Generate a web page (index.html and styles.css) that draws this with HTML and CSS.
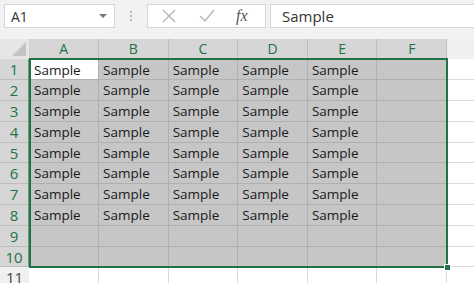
FILE: index.html
```html
<!DOCTYPE html>
<html>
<head>
  <meta charset="UTF-8">
  <title>Sheet</title>
  <link rel="stylesheet" href="styles.css">
</head>
<body>
<div class="toolbar">
  <div class="namebox">
    <span>A1</span>
    <svg class="caret" width="8" height="5" viewBox="0 0 8 5"><path d="M0 0H8L4 4z" fill="#777"/></svg>
  </div>
  <div class="grip"><i></i><i></i><i></i></div>
  <div class="fxbtns">
    <svg width="14" height="14" viewBox="0 0 14 14"><path d="M1 1L13 13M13 1L1 13" stroke="#b4b4b4" stroke-width="1.3" fill="none"/></svg>
    <svg width="16" height="14" viewBox="0 0 16 14"><path d="M1 7L6 12L15 1" stroke="#b4b4b4" stroke-width="1.4" fill="none"/></svg>
    <span class="fx">fx</span>
  </div>
  <div class="formula">Sample</div>
</div>

<div class="sheet">
  <table class="grid">
    <thead>
      <tr>
        <th class="corner"><div class="tri"></div></th>
        <th class="sel">A</th><th class="sel">B</th><th class="sel">C</th>
        <th class="sel">D</th><th class="sel">E</th><th class="sel">F</th>
        <th class="rest"></th>
      </tr>
    </thead>
    <tbody id="rows"></tbody>
  </table>
  <div class="selection"><div class="handle"></div></div>
</div>

<script>
  // build rows 1..11
  let body = document.getElementById("rows");
  for (let r = 1; r <= 11; r++) {
    let tr = document.createElement("tr");
    let th = document.createElement("th");
    th.textContent = r;
    if (r <= 10) th.className = "sel";
    tr.appendChild(th);
    for (let c = 0; c < 7; c++) {
      let td = document.createElement("td");
      if (r <= 10 && c < 6) td.className = "on";
      if (r == 1 && c == 0) td.className = "active";
      if (r <= 8 && c < 5) td.textContent = "Sample";
      tr.appendChild(td);
    }
    body.appendChild(tr);
  }
</script>
</body>
</html>
```

FILE: styles.css
```css
* {
  margin: 0;
  padding: 0;
  box-sizing: border-box;
}
body {
  width: 474px;
  height: 283px;
  overflow: hidden;
  background: #ffffff;
  font-family: "Open Sans", "Noto Sans", sans-serif;
}
.toolbar {
  display: flex;
  align-items: flex-start;
  height: 39px;
  padding-top: 4px;
  background: #f2f2f2;
}
.namebox {
  display: flex;
  align-items: center;
  justify-content: space-between;
  width: 111px;
  height: 24px;
  margin-left: 4px;
  padding: 0 7px 0 6px;
  background: #fff;
  border: 1px solid #d6d6d6;
  font-size: 14px;
  color: #333;
}
.grip {
  display: flex;
  flex-direction: column;
  gap: 2px;
  margin: 7px 0 0 15px;
  width: 2px;
}
.grip i {
  display: block;
  width: 2px;
  height: 2px;
  background: #b8b8b8;
}
.fxbtns {
  display: flex;
  align-items: center;
  gap: 23px;
  width: 119px;
  height: 24px;
  margin-left: 15px;
  padding-left: 14px;
  background: #fff;
  border: 1px solid #d6d6d6;
}
.fx {
  font-family: "Liberation Serif", serif;
  font-style: italic;
  font-size: 16px;
  color: #555;
  margin-left: -2px;
}
.formula {
  flex: 1;
  height: 24px;
  margin-left: 4px;
  padding: 1px 0 0 11px;
  background: #fff;
  border: 1px solid #d6d6d6;
  border-right: none;
  font-size: 15px;
  color: #333;
}
.sheet {
  position: relative;
}
.grid {
  border-collapse: collapse;
  table-layout: fixed;
  width: 516px;
}
.grid th, .grid td {
  height: 20.8px;
  font-size: 13.5px;
  font-weight: normal;
  line-height: 18px;
  white-space: nowrap;
  overflow: hidden;
}
.grid thead th {
  height: 20px;
  width: 69.6px;
  background: #f0f0f0;
  border-right: 1px solid #d0d0d0;
  color: #444;
  font-size: 14px;
  text-align: center;
}
.grid thead th.sel {
  background: #d6d6d6;
  color: #217346;
  border-right: 1px solid #bdbdbd;
  border-bottom: 2px solid #6a9e80;
}
.grid thead th.corner {
  width: 29px;
  background: #e6e6e6;
  position: relative;
}
.grid thead th.rest {
  width: 70px;
  border-right: none;
}
.tri {
  position: absolute;
  right: 3px;
  bottom: 3px;
  width: 0;
  height: 0;
  border-left: 14px solid transparent;
  border-bottom: 14px solid #c4c4c4;
}
.grid tbody th {
  background: #f0f0f0;
  color: #444;
  font-size: 15px;
  border-bottom: 1px solid #dadada;
  text-align: center;
}
.grid tbody th.sel {
  background: #d6d6d6;
  color: #217346;
  border-bottom: 1px solid #bdbdbd;
  border-right: 2px solid #6a9e80;
}
.grid td {
  padding-left: 4px;
  color: #1a1a1a;
  border-right: 1px solid #dadada;
  border-bottom: 1px solid #dadada;
}
.grid td.on {
  background: #c6c6c6;
  border-right: 1px solid #b0b0b0;
  border-bottom: 1px solid #b0b0b0;
}
.grid td.active {
  background: #fff;
  border-right: 1px solid #b0b0b0;
  border-bottom: 1px solid #b0b0b0;
}
.selection {
  position: absolute;
  left: 29px;
  top: 19px;
  width: 419px;
  height: 210px;
  border: 2px solid #217346;
  pointer-events: none;
}
.handle {
  position: absolute;
  right: -5px;
  bottom: -5px;
  width: 7px;
  height: 7px;
  background: #217346;
  border: 1px solid #fff;
}
```
